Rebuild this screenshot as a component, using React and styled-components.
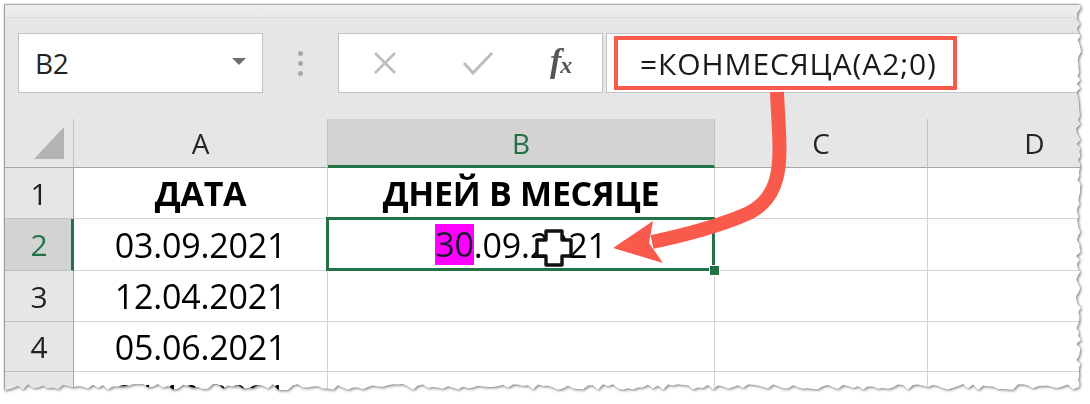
import React from "react";
import styled, { createGlobalStyle } from "styled-components";

const GlobalStyle = createGlobalStyle`
  html, body {
    margin: 0;
    padding: 0;
    background: #fff;
  }
  body {
    font-family: "Open Sans", "Noto Sans", sans-serif;
  }
`;

// рваный край справа и снизу
const tornEdge = (() => {
  let s = 11;
  const rnd = () => {
    s = (s * 9301 + 49297) % 233280;
    return s / 233280;
  };
  const pts = ["0px 0px"];
  for (let y = 0; y <= 384; y += 4) pts.push(`${1072 + rnd() * 5}px ${y}px`);
  for (let x = 1074; x >= 0; x -= 5) pts.push(`${x}px ${380 + rnd() * 6}px`);
  pts.push("0px 386px");
  return `polygon(${pts.join(",")})`;
})();

const COLS = [69, 254, 387, 213, 214];
const ROWS = [49, 51, 52, 51, 50, 51];

const dates = ["03.09.2021", "12.04.2021", "05.06.2021", "24.10.2021"];

export default function App() {
  return (
    <>
      <GlobalStyle />
      <Page>
        <Shadow>
          <Frame $clip={tornEdge}>
            <Ribbon>
              <TopStrip />
              <FormulaBar>
                <NameBox>
                  <span>B2</span>
                  <Caret />
                </NameBox>
                <Dots>
                  <i />
                  <i />
                  <i />
                </Dots>
                <Controls>
                  <IconBtn>
                    <svg width="26" height="26" viewBox="0 0 26 26">
                      <path d="M3 3 L23 23 M23 3 L3 23" stroke="#bdbdbd" strokeWidth="2.6" fill="none" />
                    </svg>
                  </IconBtn>
                  <IconBtn>
                    <svg width="32" height="26" viewBox="0 0 32 26">
                      <path d="M2 13 L11 23 L30 3" stroke="#bdbdbd" strokeWidth="3" fill="none" />
                    </svg>
                  </IconBtn>
                  <Fx>
                    f<sub>x</sub>
                  </Fx>
                </Controls>
                <FormulaInput>
                  <FormulaBox>=КОНМЕСЯЦА(А2;0)</FormulaBox>
                </FormulaInput>
              </FormulaBar>
            </Ribbon>

            <Sheet>
              <Corner>
                <Triangle />
              </Corner>
              <ColHead>A</ColHead>
              <ColHead $active>B</ColHead>
              <ColHead>C</ColHead>
              <ColHead>D</ColHead>

              <RowHead>1</RowHead>
              <Cell $bold>ДАТА</Cell>
              <Cell $bold>ДНЕЙ В МЕСЯЦЕ</Cell>
              <Cell />
              <Cell />

              {dates.map((d, i) => (
                <React.Fragment key={d}>
                  <RowHead $active={i === 0}>{i + 2}</RowHead>
                  <Cell>{d}</Cell>
                  {i === 0 ? (
                    <Selected>
                      <Mark>30</Mark>.09.2021
                    </Selected>
                  ) : (
                    <Cell />
                  )}
                  <Cell />
                  <Cell />
                </React.Fragment>
              ))}
            </Sheet>

            <Overlay viewBox="0 0 1090 404" width="1090" height="404">
              <path
                d="M777 92 C 779 150, 790 198, 742 216 C 715 227, 690 234, 652 242"
                stroke="#fa5a4b"
                strokeWidth="14"
                fill="none"
              />
              <path d="M613 248 L653 221 L649 243 L663 263 Z" fill="#fa5a4b" />
              <path
                d="M546 231 H562 V240 H571 V256 H562 V265 H546 V256 H537 V240 H546 Z"
                fill="#fff"
                stroke="#111"
                strokeWidth="3.4"
                strokeLinejoin="round"
              />
            </Overlay>
          </Frame>
        </Shadow>
      </Page>
    </>
  );
}

const Page = styled.div`
  width: 1090px;
  height: 404px;
  padding: 4px 0 0 4px;
  box-sizing: border-box;
  overflow: hidden;
`;

const Shadow = styled.div`
  filter: drop-shadow(1px 1px 1.5px rgba(0, 0, 0, 0.55));
`;

const Frame = styled.div`
  position: relative;
  width: 1080px;
  height: 390px;
  box-sizing: border-box;
  border-left: 1px solid #9e9e9e;
  border-top: 1px solid #a9a9a9;
  background: #fff;
  overflow: hidden;
  clip-path: ${(p) => p.$clip};
`;

const Ribbon = styled.div`
  height: 114px;
  background: #e6e6e6;
  display: flex;
  flex-direction: column;
`;

const TopStrip = styled.div`
  height: 12px;
  background: linear-gradient(#eeeeee, #e9e9e9);
  border-bottom: 1px solid #dadada;
`;

const FormulaBar = styled.div`
  display: flex;
  align-items: stretch;
  height: 60px;
  margin-top: 15px;
  padding-left: 13px;
`;

const NameBox = styled.div`
  width: 245px;
  box-sizing: border-box;
  background: #fff;
  border: 1px solid #c3c3c3;
  display: flex;
  align-items: center;
  justify-content: space-between;
  padding: 0 16px 0 16px;
  font-size: 28px;
  color: #222;
  letter-spacing: -0.3px;
`;

const Caret = styled.div`
  width: 0;
  height: 0;
  border-left: 7px solid transparent;
  border-right: 7px solid transparent;
  border-top: 7px solid #6f6f6f;
  margin-top: -4px;
`;

const Dots = styled.div`
  width: 75px;
  display: flex;
  flex-direction: column;
  align-items: center;
  justify-content: center;
  gap: 5px;
  i {
    width: 5px;
    height: 5px;
    border-radius: 50%;
    background: #a9a9a9;
  }
`;

const Controls = styled.div`
  width: 265px;
  box-sizing: border-box;
  background: #fff;
  border: 1px solid #c3c3c3;
  display: grid;
  grid-template-columns: 90px 80px 1fr;
  align-items: center;
  padding-left: 33px;
`;

const IconBtn = styled.div`
  display: flex;
  align-items: center;
  svg {
    display: block;
  }
`;

const Fx = styled.div`
  font-family: "Liberation Serif", "DejaVu Serif", serif;
  font-style: italic;
  font-weight: bold;
  font-size: 34px;
  line-height: 1;
  color: #555;
  padding-left: 8px;
  margin-top: -4px;
  sub {
    font-size: 24px;
    vertical-align: -1px;
    margin-left: -1px;
  }
`;

const FormulaInput = styled.div`
  flex: 1;
  margin-left: 3px;
  background: #fff;
  border: 1px solid #c3c3c3;
  display: flex;
  align-items: center;
  padding-left: 7px;
`;

const FormulaBox = styled.div`
  width: 343px;
  height: 54px;
  box-sizing: border-box;
  border: 4px solid #f85a4b;
  display: flex;
  align-items: center;
  padding-left: 22px;
  font-size: 30px;
  color: #1a1a1a;
  white-space: nowrap;
  letter-spacing: 0.9px;
`;

const Sheet = styled.div`
  display: grid;
  grid-template-columns: ${COLS.map((c) => c + "px").join(" ")};
  grid-template-rows: ${ROWS.map((r) => r + "px").join(" ")};
  width: max-content;
`;

const Corner = styled.div`
  background: #e6e6e6;
  border-right: 1px solid #c2c2c2;
  border-bottom: 1px solid #a6a6a6;
  box-sizing: border-box;
  display: flex;
  align-items: flex-end;
  justify-content: flex-end;
  padding: 0 9px 8px 0;
`;

const Triangle = styled.div`
  width: 30px;
  height: 32px;
  background: #b3b3b3;
  clip-path: polygon(100% 0, 100% 100%, 0 100%);
`;

const ColHead = styled.div`
  box-sizing: border-box;
  background: ${(p) => (p.$active ? "#d3d3d3" : "#e6e6e6")};
  border-right: 1px solid #c2c2c2;
  border-bottom: ${(p) => (p.$active ? "3px solid #217346" : "1px solid #a6a6a6")};
  display: flex;
  align-items: center;
  justify-content: center;
  padding-top: ${(p) => (p.$active ? "2px" : "0")};
  font-size: 28px;
  color: ${(p) => (p.$active ? "#217346" : "#262626")};
`;

const RowHead = styled.div`
  box-sizing: border-box;
  background: ${(p) => (p.$active ? "#d3d3d3" : "#e6e6e6")};
  border-right: ${(p) => (p.$active ? "3px solid #217346" : "1px solid #a6a6a6")};
  border-bottom: 1px solid #c2c2c2;
  display: flex;
  align-items: center;
  justify-content: center;
  padding-left: ${(p) => (p.$active ? "2px" : "0")};
  font-size: 30px;
  color: ${(p) => (p.$active ? "#217346" : "#222")};
`;

const Cell = styled.div`
  box-sizing: border-box;
  border-right: 1px solid #d4d4d4;
  border-bottom: 1px solid #d4d4d4;
  display: flex;
  align-items: center;
  justify-content: center;
  font-size: 34px;
  font-weight: ${(p) => (p.$bold ? 700 : 400)};
  color: #000;
  white-space: nowrap;
  letter-spacing: ${(p) => (p.$bold ? "-0.3px" : "-0.2px")};
`;

const Selected = styled(Cell)`
  position: relative;
  &::after {
    content: "";
    position: absolute;
    inset: -2px -1px -1px -2px;
    border: 3px solid #217346;
  }
  &::before {
    content: "";
    position: absolute;
    right: -6px;
    bottom: -6px;
    width: 9px;
    height: 9px;
    background: #217346;
    border: 1.5px solid #fff;
    z-index: 1;
  }
`;

const Mark = styled.span`
  display: inline-block;
  background: #ff00ff;
  line-height: 41px;
  color: #1a1a2e;
`;

const Overlay = styled.svg`
  position: absolute;
  left: -5px;
  top: -5px;
  pointer-events: none;
  overflow: visible;
`;
